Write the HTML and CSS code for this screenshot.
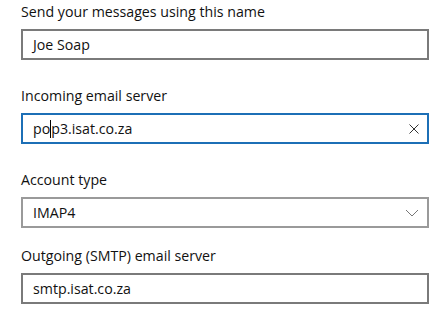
FILE: index.html
```html
<!DOCTYPE html>
<html>
<head>
<meta charset="utf-8">
<link rel="stylesheet" href="styles.css">
</head>
<body>
<div class="form">
  <div class="field">
    <div class="label">Send your messages using this name</div>
    <div class="box"><span class="value">Joe Soap</span></div>
  </div>
  <div class="field">
    <div class="label">Incoming email server</div>
    <div class="box focus"><span class="value">po<span class="caret"></span>p3.isat.co.za</span>
      <svg class="icon" width="10" height="10" viewBox="0 0 10 10"><path d="M0.5 0.5 L9.5 9.5 M9.5 0.5 L0.5 9.5" stroke="#333" stroke-width="1" fill="none"/></svg>
    </div>
  </div>
  <div class="field tight">
    <div class="label">Account type</div>
    <div class="box select"><span class="value">IMAP4</span>
      <svg class="icon" width="14" height="8" viewBox="0 0 14 8"><path d="M1 1 L7 7 L13 1" stroke="#777" stroke-width="1" fill="none"/></svg>
    </div>
  </div>
  <div class="field">
    <div class="label">Outgoing (SMTP) email server</div>
    <div class="box"><span class="value">smtp.isat.co.za</span></div>
  </div>
</div>
</body>
</html>
```
FILE: styles.css
```css
html, body {
  margin: 0;
  padding: 0;
  background: #fff;
}
.form {
  padding: 2px 0 0 21px;
  width: 408px;
  font-family: "Open Sans", "Noto Sans", sans-serif;
  font-size: 14.2px;
  color: #111;
}
.field {
  margin-bottom: 26px;
}
.field.tight {
  margin-bottom: 18px;
}
.label {
  line-height: 20px;
  height: 20px;
  margin-bottom: 7px;
}
.box {
  box-sizing: border-box;
  height: 31px;
  border: 2px solid #7a7a7a;
  display: flex;
  align-items: center;
  padding: 0 8px 0 10px;
}
.box.focus {
  border-color: #1c6fb6;
}
.box.select {
  border-color: #9a9a9a;
}
.value {
  flex: 1;
  white-space: nowrap;
}
.caret {
  display: inline-block;
  width: 1px;
  height: 18px;
  background: #000;
  vertical-align: -4px;
}
.icon {
  flex: none;
}
```
